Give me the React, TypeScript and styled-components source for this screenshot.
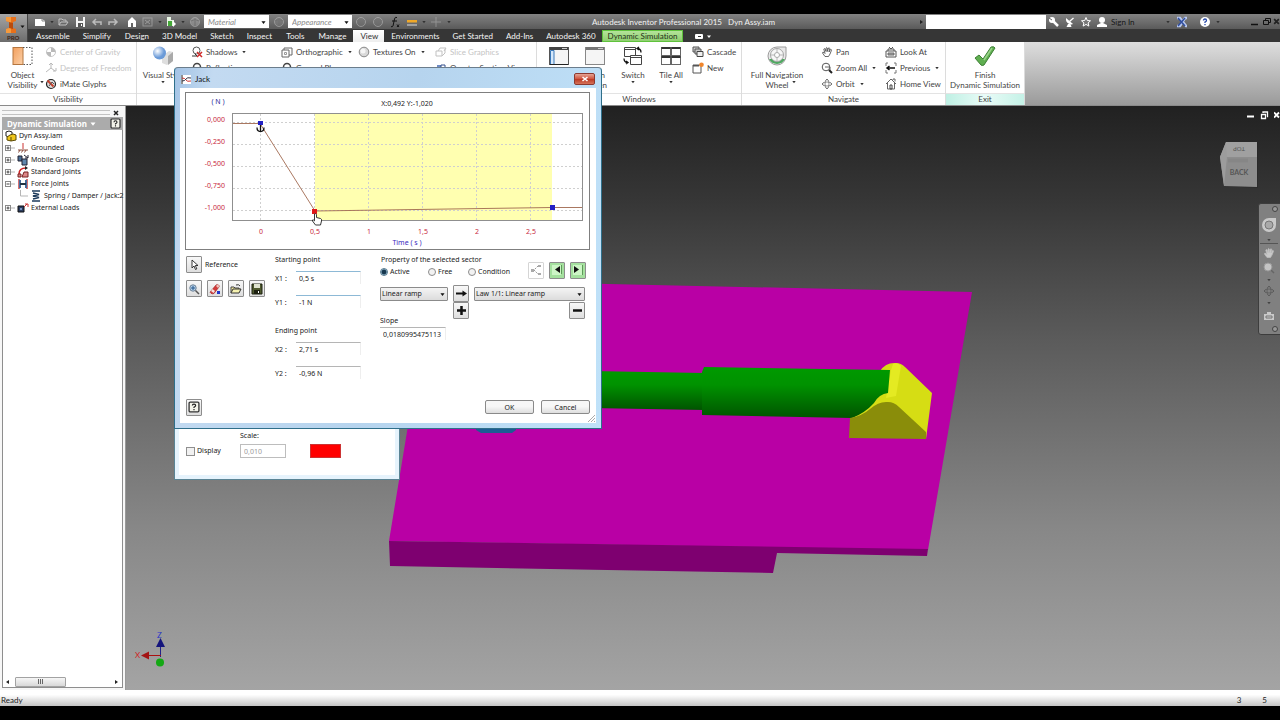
import React from "react";
import styled, { createGlobalStyle, css } from "styled-components";

const GlobalStyle = createGlobalStyle`
  * { box-sizing: border-box; }
  body { margin: 0; background: #000; font-variant-ligatures: none; }
  button, input, select { font: inherit; color: inherit; margin: 0; font-variant-ligatures: none; }
`;

const UI = `Lato, "Open Sans", sans-serif`;
const DIALOG = `"Noto Sans", "Open Sans", sans-serif`;

/* ---------- page shell ---------- */

const Page = styled.div`
  position: relative;
  display: flex;
  flex-direction: column;
  min-height: 100vh;
  padding: 14px 0;
  background: #000;
  overflow: hidden;
  font: 8px/10px ${UI};
  font-variant-ligatures: none;
  color: #333;
`;

const Header = styled.header`
  display: flex;
  background: #363636;
  height: 28px;
`;

const AppButton = styled.button`
  display: flex;
  align-items: center;
  flex: 0 0 27px;
  padding: 0;
  border: 0;
  border-right: 1px solid #444;
  background: linear-gradient(#a5a5a5, #6c6c6c);
`;

const HeaderMain = styled.div`
  flex: 1;
  min-width: 0;
  display: flex;
  flex-direction: column;
`;

const TitleBar = styled.div`
  display: flex;
  align-items: center;
  height: 15px;
  padding-left: 4px;
  background: linear-gradient(#828282, #5a5a5a);
  color: #fff;
`;

const Tool = styled.button<{ $w?: number; $dim?: boolean }>`
  display: flex;
  align-items: center;
  justify-content: center;
  flex: 0 0 ${(p) => p.$w ?? 16}px;
  height: 14px;
  padding: 0;
  border: 0;
  background: none;
  opacity: ${(p) => (p.$dim ? 0.4 : 1)};
`;

const Gap = styled.span<{ $w: number }>`
  flex: 0 0 ${(p) => p.$w}px;
`;

const ComboBox = styled.span<{ $w: number; $kind: "bar" | "dialog" }>`
  position: relative;
  display: block;
  flex: 0 0 ${(p) => p.$w}px;
  select {
    display: block;
    appearance: none;
    width: 100%;
    height: 13px;
    padding: 0 4px;
    border: 0;
    border-radius: 0;
    outline: 0;
    background: #fff;
    line-height: 12px;
    color: #8a8a8a;
    font-style: italic;
    ${(p) =>
      p.$kind === "dialog" &&
      css`
        height: 14px;
        border: 1px solid #8b8b8b;
        border-radius: 1px;
        padding: 0 1px;
        background: linear-gradient(#f4f4f4, #dcdcdc);
        color: #222;
        font-style: normal;
      `}
  }
  svg {
    position: absolute;
    right: 3px;
    top: 5px;
    pointer-events: none;
  }
`;

const WindowTitle = styled.h1`
  flex: 1;
  margin: 0;
  padding-left: 140px;
  font: 8px/12px ${UI};
  color: #f2f2f2;
  white-space: pre;
`;

const SearchBox = styled.input`
  flex: 0 0 120px;
  width: 120px;
  height: 14px;
  padding: 0 3px;
  border: 0;
  background: #fff;
`;

const SignIn = styled.button`
  flex: 0 0 54px;
  padding: 0 0 0 1px;
  border: 0;
  background: none;
  text-align: left;
  color: #161616;
`;

const Tabs = styled.nav`
  display: flex;
  align-items: stretch;
  height: 13px;
  padding: 0 1px;
`;

const Tab = styled.a<{ $state?: "active" | "context"; $wide?: boolean }>`
  padding: 1px ${(p) => (p.$wide ? 7 : 6)}px 0 7px;
  line-height: 12px;
  color: #f4f4f4;
  text-decoration: none;
  white-space: nowrap;
  ${(p) =>
    p.$state === "active" &&
    css`
      background: linear-gradient(#fff, #eee);
      color: #333;
      margin: 1px 0 0;
      padding-top: 0;
    `}
  ${(p) =>
    p.$state === "context" &&
    css`
      background: linear-gradient(#b4e39a, #8fce70);
      border: 1px solid #5fc23c;
      color: #1f2f18;
      padding: 0 5px;
      margin: 1px 0 0;
      line-height: 10px;
    `}
`;

/* ---------- ribbon ---------- */

const Ribbon = styled.section`
  display: flex;
  height: 64px;
  background: linear-gradient(#dedede, #9a9a9a);
  border-bottom: 1px solid #8a8a8a;
`;

const Panel = styled.div<{ $w: number }>`
  flex: 0 0 ${(p) => p.$w}px;
  display: flex;
  flex-direction: column;
  background: #fff;
  border-right: 1px solid #dcdcdc;
`;

const PanelBody = styled.div<{ $left?: number }>`
  flex: 1;
  min-height: 0;
  display: flex;
  align-items: flex-start;
  padding: 4px 0 0 ${(p) => p.$left ?? 0}px;
`;

const PanelLabel = styled.div<{ $exit?: boolean }>`
  flex: 0 0 12px;
  line-height: 10px;
  border-top: 1px solid #e3e3e3;
  text-align: center;
  color: #444;
  background: ${(p) => (p.$exit ? "linear-gradient(90deg,#bff0e4,#e9fbf7 50%,#c5f2e7)" : "#fff")};
`;

const BigButton = styled.button<{ $w: number }>`
  display: flex;
  flex-direction: column;
  align-items: center;
  flex: 0 0 ${(p) => p.$w}px;
  padding: 0;
  border: 0;
  background: none;
  color: #444;
  line-height: 10px;
  white-space: nowrap;
  > svg:first-child { margin-bottom: 4px; }
`;

const BigLine = styled.span`
  position: relative;
  svg { position: absolute; right: -7px; top: 0; }
`;

const ToolColumn = styled.div<{ $w: number }>`
  flex: 0 0 ${(p) => p.$w}px;
  display: flex;
  flex-direction: column;
`;

const SmallButton = styled.button`
  display: flex;
  align-items: center;
  gap: 3px;
  height: 16px;
  padding: 0 0 4px;
  border: 0;
  background: none;
  color: #444;
  white-space: nowrap;
  &:disabled { color: #c4c4c4; }
  &:disabled svg { opacity: 0.4; }
`;

const ArrowSlot = styled.span`
  display: flex;
  padding-left: 2px;
`;

/* ---------- workspace ---------- */

const Workspace = styled.main`
  flex: 1;
  display: flex;
  min-height: 0;
`;

const Browser = styled.aside`
  flex: 0 0 126px;
  width: 126px;
  min-width: 0;
  display: flex;
  flex-direction: column;
  padding: 2px 2px 2px 2px;
  background: #f7f7f7;
  border-right: 1px solid #999;
  font: 7px/12px ${DIALOG};
  color: #222;
`;

const Grip = styled.div`
  display: flex;
  align-items: center;
  gap: 3px;
  height: 9px;
  &::before {
    content: "";
    flex: 1;
    height: 3px;
    border: solid #c3c3c3;
    border-width: 1px 0;
  }
`;

const BareButton = styled.button`
  display: flex;
  padding: 0;
  border: 0;
  background: none;
`;

const BrowserTitle = styled.div`
  display: flex;
  align-items: center;
  justify-content: space-between;
  height: 13px;
  padding: 0 2px 0 5px;
  background: #ababab;
  color: #fff;
  font: bold 8px/12px ${DIALOG};
  white-space: nowrap;
  span { display: flex; align-items: center; gap: 3px; }
`;

const TreeBox = styled.div`
  flex: 1;
  min-width: 0;
  display: flex;
  flex-direction: column;
  justify-content: space-between;
  border: 1px solid #8e8e8e;
  border-top: 0;
  background: #fff;
`;

const Tree = styled.ul`
  list-style: none;
  margin: 0;
  padding: 0 0 0 2px;
`;

const TreeRow = styled.li<{ $level: number }>`
  display: flex;
  align-items: center;
  gap: 2px;
  height: 12px;
  padding-left: ${(p) => (p.$level === 2 ? 14 : 0)}px;
  white-space: nowrap;
  svg { flex: none; }
`;

const ScrollBar = styled.div`
  display: flex;
  align-items: center;
  height: 11px;
  padding: 0 4px 0 3px;
  gap: 5px;
`;

const ScrollThumb = styled.button`
  flex: 0 0 51px;
  height: 10px;
  display: flex;
  justify-content: center;
  align-items: center;
  padding: 0;
  margin-right: auto;
  border: 1px solid #a2a2a2;
  border-radius: 1px;
  background: linear-gradient(#f6f6f6, #d8d8d8);
`;

const Viewport = styled.section`
  position: relative;
  flex: 1;
  min-width: 0;
  background: linear-gradient(#212121 0%, #363636 16%, #5b5b5b 40%, #878787 72%, #a4a4a4 100%);
  overflow: hidden;
`;

const Scene = styled.svg`
  position: absolute;
  inset: 0;
  width: 100%;
  height: 100%;
`;

const MdiButtons = styled.div`
  position: absolute;
  top: 4px;
  right: 0;
  display: flex;
  gap: 5px;
`;

const ViewCube = styled.div`
  position: absolute;
  top: 33px;
  right: 20px;
`;

const NavBar = styled.div`
  position: absolute;
  top: 97px;
  right: -3px;
  width: 25px;
  height: 132px;
  display: flex;
  flex-direction: column;
  align-items: center;
  padding: 2px 4px 2px 0;
  background: #808080;
  border: 1px solid #3d3d3d;
  border-radius: 3px;
`;

const NavTool = styled.button<{ $h: number; $end?: boolean }>`
  display: flex;
  align-items: center;
  justify-content: center;
  align-self: ${(p) => (p.$end ? "flex-end" : "center")};
  height: ${(p) => p.$h}px;
  padding: 0;
  border: 0;
  background: none;
`;

const NavRule = styled.hr`
  width: 18px;
  height: 1px;
  margin: 1px 0;
  border: 0;
  background: #555;
`;

const StatusBar = styled.footer`
  display: flex;
  align-items: center;
  height: 16px;
  padding: 4px 13px 0 1px;
  gap: 21px;
  background: linear-gradient(#fff 30%, #c4c4c4);
  color: #222;
  span:first-child { flex: 1; }
`;

/* ---------- floating windows ---------- */

const BackWindow = styled.section`
  position: absolute;
  left: 174px;
  top: 174px;
  width: 226px;
  height: 306px;
  display: flex;
  flex-direction: column;
  justify-content: flex-end;
  padding: 0 4px 4px;
  border: 1px solid #5b8494;
  background: #e6f3fc;
  font: 7px/10px ${DIALOG};
  color: #222;
`;

const BackBody = styled.div`
  flex: 1;
  display: flex;
  align-items: flex-end;
  padding: 0 0 17px 7px;
  background: #fff;
`;

const DisplayCheck = styled.label`
  display: flex;
  align-items: center;
  gap: 2px;
  flex: 0 0 54px;
  height: 14px;
  input {
    appearance: none;
    width: 9px;
    height: 9px;
    border: 1px solid #8f8f8f;
    background: #f1f1f1;
  }
`;

const ScaleField = styled.label`
  display: flex;
  flex-direction: column;
  gap: 3px;
  flex: 0 0 70px;
  input {
    width: 46px;
    height: 14px;
    padding: 0 3px;
    border: 1px solid #bdbdbd;
    background: #fff;
    color: #999;
  }
`;

const ColorSwatch = styled.button`
  width: 31px;
  height: 14px;
  padding: 0;
  border: 1px solid #c33;
  background: #f00;
`;

const Dialog = styled.section`
  position: absolute;
  left: 174px;
  top: 67px;
  width: 428px;
  display: flex;
  flex-direction: column;
  padding: 0 5px 5px;
  border: 1px solid #2f6f8a;
  border-top-color: #6b7d8c;
  border-radius: 4px 4px 0 0;
  background: linear-gradient(100deg, #a3c3e5, #c3daf1 8%, #b6d4ee 50%, #c0e2f9);
  font: 7px/10px ${DIALOG};
  color: #222;
`;

const DialogTitle = styled.header`
  display: flex;
  align-items: center;
  gap: 4px;
  height: 20px;
  padding: 2px 1px 0;
  font: 8px/10px ${UI};
  color: #111;
  h2 { flex: 1; margin: 0; font: inherit; }
`;

const CloseButton = styled.button`
  display: flex;
  align-items: center;
  justify-content: center;
  width: 21px;
  height: 12px;
  padding: 0;
  border: 1px solid #8d3a30;
  border-radius: 2px;
  background: linear-gradient(#e5a595, #d0553f 48%, #bb3a24 52%, #d6735a);
`;

const DialogBody = styled.div`
  background: #fff;
  padding: 4px 6px 7px 5px;
`;

const ChartBox = styled.div`
  border: 1px solid #7f7f7f;
  height: 158px;
  svg { display: block; width: 100%; height: 100%; }
`;

const Columns = styled.div`
  display: grid;
  grid-template-columns: 84px 104px 1fr;
  padding: 5px 4px 0 0;
  height: 148px;
`;

const ButtonRow = styled.div<{ $gap: number; $mb?: number }>`
  display: flex;
  align-items: center;
  gap: ${(p) => p.$gap}px;
  margin-bottom: ${(p) => p.$mb ?? 0}px;
`;

const IconButton = styled.button<{ $bare?: boolean }>`
  display: flex;
  align-items: center;
  justify-content: center;
  flex: 0 0 16px;
  width: 16px;
  height: 17px;
  padding: 0;
  border: 1px solid ${(p) => (p.$bare ? "#d5d5d5" : "#8d8d8d")};
  border-radius: 1px;
  background: ${(p) => (p.$bare ? "#fff" : "linear-gradient(#f8f8f8, #dedede)")};
`;

const ToolSide = styled.div`
  width: 84px;
  padding: 1px 0 0 1px;
`;

const PointGroup = styled.fieldset`
  min-width: 0;
  margin: 0 0 0 6px;
  padding: 0;
  border: 0;
  height: 71px;
  legend { padding: 0 0 6px; line-height: 10px; }
`;

const PointField = styled.label`
  display: flex;
  align-items: flex-start;
  height: 24px;
  span { flex: 0 0 21px; padding-top: 3px; white-space: nowrap; }
`;

const ValueInput = styled.input<{ $tone: string; $w: number }>`
  width: ${(p) => p.$w}px;
  height: 13px;
  padding: 0 3px;
  border: 0;
  border-top: 1px solid ${(p) => p.$tone};
  border-right: 1px solid #eee;
  background: #fff;
`;

const SectorSide = styled.div`
  display: flex;
  flex-direction: column;
  padding-left: 7px;
`;

const SectorTop = styled.div`
  display: flex;
  justify-content: space-between;
  height: 30px;
`;

const RadioSet = styled.fieldset`
  margin: 0;
  padding: 0;
  border: 0;
  legend { padding: 0 0 0 1px; line-height: 10px; }
  > div { display: flex; padding-top: 2px; }
`;

const RadioLabel = styled.label<{ $w: number }>`
  display: flex;
  align-items: center;
  gap: 2px;
  width: ${(p) => p.$w}px;
  input {
    appearance: none;
    width: 8px;
    height: 8px;
    border: 1px solid #8b8b8b;
    border-radius: 50%;
    background: #f2f2f2;
  }
  input:checked {
    background: radial-gradient(circle, #16384f 0 2px, #a9cfe4 3px);
    border-color: #56788c;
  }
`;

const LawGrid = styled.div`
  display: grid;
  grid-template-columns: 68px 16px 90px 16px;
  column-gap: 5px;
  align-items: center;
  height: 34px;
  margin-bottom: -3px;
  > :nth-child(3) { grid-column: 3 / 5; }
  > :nth-child(4) { grid-column: 2; }
  > :nth-child(5) { grid-column: 4; }
`;

const SlopeField = styled.label`
  display: flex;
  flex-direction: column;
  width: 66px;
  span { height: 11px; line-height: 10px; }
`;

const Footer = styled.footer`
  display: flex;
  align-items: center;
  gap: 7px;
  height: 18px;
  padding-left: 1px;
`;

const Spacer = styled.span`
  flex: 1;
`;

const PushButton = styled.button`
  width: 49px;
  height: 14px;
  padding: 0;
  border: 1px solid #8a8a8a;
  border-radius: 2px;
  background: linear-gradient(#f7f7f7 45%, #dedede);
  line-height: 11px;
`;

const ResizeGrip = styled.svg`
  position: absolute;
  right: 5px;
  bottom: 5px;
`;

/* ---------- icons ---------- */

const Caret = ({ color = "#333", size = 5 }: { color?: string; size?: number }) => (
  <svg width={size} height={size} viewBox="0 0 6 6" aria-hidden="true">
    <path d="M0.5 1.5h5L3 4.8z" fill={color} />
  </svg>
);

const SmallCaret = ({ color }: { color?: string }) => <Caret color={color} size={4} />;

const Combo = ({ label, w, kind = "bar" }: { label: string; w: number; kind?: "bar" | "dialog" }) => (
  <ComboBox $w={w} $kind={kind}>
    <select aria-label={label} defaultValue={label}>
      <option>{label}</option>
    </select>
    <Caret color="#111" size={5} />
  </ComboBox>
);

const Svg = ({ w = 12, h = 12, vb, children }: { w?: number; h?: number; vb?: string; children: React.ReactNode }) => (
  <svg width={w} height={h} viewBox={vb ?? `0 0 ${w} ${h}`} fill="none" aria-hidden="true">
    {children}
  </svg>
);

const AppLogo = () => (
  <Svg w={27} h={28}>
    <path d="M6 3h10v4l-3 1v6l3 1v4H6v-4l3-1V8L6 7z" fill="#e8701a" />
    <path d="M6 3h5v16H6v-4l3-1V8L6 7z" fill="#f59a3c" />
    <path d="M9 8l4 1v6l-4-1z" fill="#b94b0c" />
    <path d="M20.500 11.500h4l-2 2.500z" fill="#111" />
    <text x="7" y="26" fontFamily="Lato, sans-serif" fontSize="6" fontWeight="bold" fill="#3a2416">PRO</text>
  </Svg>
);

const DocIcon = () => <Svg><path d="M1 3h7l3 2v5H1z" fill="#fff" /><path d="M8 3v2h3" stroke="#888" /></Svg>;
const OpenIcon = ({ c = "#c2c2c2" }) => <Svg><path d="M2 9V3h3l1 1h3v2M2 9l2-3h7L9 9z" stroke={c} /></Svg>;
const SaveIcon = () => <Svg><path d="M2 1h9v10H2z" fill="#f4f4f4" /><path d="M4 1h5v4H4z" fill="#777" /><path d="M4 7h5v4H4z" fill="#555" /><path d="M7 8h1v2H7z" fill="#fff" /></Svg>;
const UndoIcon = () => <Svg><path d="M10 9V6H3M5 3L2 6l3 3" stroke="#bcbcbc" strokeWidth="1.500" /></Svg>;
const RedoIcon = () => <Svg><path d="M2 9V6h7M7 3l3 3-3 3" stroke="#bcbcbc" strokeWidth="1.500" /></Svg>;
const HomeIcon = ({ c = "#fff" }) => <Svg><path d="M6 1l4 4v6H7V7H5v4H2V5z" fill={c} /></Svg>;
const PickIcon = () => <Svg><rect x="1" y="2" width="9" height="8" stroke="#ddd" /><path d="M3 4l5 4M8 4L3 8" stroke="#ddd" /></Svg>;
const UpdateIcon = () => <Svg><path d="M2 1h4v3h3v6H2z" fill="#e8f6e4" /><path d="M3 5h4v5H3z" fill="#44a838" /><path d="M8 5l3 3-3 3z" fill="#fff" /></Svg>;
const Sphere = ({ c = "#bbb" }) => <Svg><circle cx="6" cy="6" r="4.500" fill={c} stroke="#ddd" /><path d="M2 5q4-3 8 0M6 2v8" stroke="#777" /></Svg>;
const PlusIcon = ({ c = "#ccc" }) => <Svg><path d="M6 1v10M1 6h10" stroke={c} /></Svg>;

const WrenchIcon = () => <Svg><circle cx="4" cy="4" r="3" fill="#fff" /><path d="M4 4l6 6" stroke="#fff" strokeWidth="2.500" /><path d="M1 2l3 2" stroke="#666" /></Svg>;
const DishIcon = () => <Svg><path d="M2 2q-.500 4 2.500 5.500T9 8z" fill="#fff" /><path d="M4 8l-1.500 3h5L6.500 8z" fill="#fff" /><path d="M5.500 5.500L9.500 2" stroke="#fff" strokeWidth="1.300" /></Svg>;
const StarIcon = () => <Svg><path d="M6 1.500l1.300 3 3.200.3-2.400 2.100.8 3.200L6 8.400l-2.900 1.700.8-3.200L1.500 4.800l3.200-.3z" fill="#777" stroke="#fff" /></Svg>;
const UserIcon = () => <Svg><circle cx="6" cy="4" r="3" fill="#fff" /><path d="M1 11V9l4-2h2l4 2v2z" fill="#fff" /></Svg>;
const ExchangeIcon = () => <Svg><path d="M1 2h3l6 8h1M1 10h3l5-8h2" stroke="#b8c8f0" strokeWidth="2.500" /><path d="M2 2l7 8M2 10l7-8" stroke="#2f4ea0" strokeWidth="1.500" /></Svg>;
const HelpBall = () => <Svg><circle cx="6" cy="6" r="5" fill="#fff" /><path d="M4.500 4.500q0-1.500 1.500-1.500t1.500 1.500Q7.500 5.500 6 6v1M6 8v1.200" stroke="#2648a8" strokeWidth="1.300" /></Svg>;

const ObjectVisIcon = () => (
  <Svg w={21} h={20}>
    <defs>
      <linearGradient id="door" x1="0" y1="0" x2="1" y2="1"><stop offset="0" stopColor="#f3a05e" /><stop offset="1" stopColor="#fbd0a8" /></linearGradient>
    </defs>
    <rect x="1" y="1.500" width="10" height="17" fill="url(#door)" stroke="#b5763f" />
    <path d="M11 1.500h9v17h-9" stroke="#555" strokeDasharray="1.500 1.500" />
  </Svg>
);
const GravityIcon = () => <Svg><circle cx="6" cy="6" r="4.500" stroke="#777" /><path d="M6 6V1.500A4.500 4.500 0 0 1 10.500 6zM6 6v4.500A4.500 4.500 0 0 1 1.500 6z" fill="#555" /></Svg>;
const FreedomIcon = () => <Svg><path d="M1 10l5-4 4 3M6 6V1M4 3l2-2 2 2M8 9h3V6" stroke="#555" /></Svg>;
const GlyphIcon = () => <Svg><circle cx="6" cy="6" r="4.500" fill="#ddd" stroke="#222" strokeWidth="1.200" /><path d="M2.500 2.500l6 6" stroke="#c8402c" strokeWidth="2" /><path d="M4 8l3-4 2 2" stroke="#555" /></Svg>;
const VisualIcon = () => (
  <Svg w={22} h={20}>
    <defs>
      <radialGradient id="ball" cx="0.350" cy="0.350"><stop offset="0" stopColor="#fff" /><stop offset="1" stopColor="#6a9ad8" /></radialGradient>
    </defs>
    <path d="M10 10l7-5 4 1v9l-6 4-5-2z" fill="#dedede" />
    <path d="M16 10l5-4v9l-5 4z" fill="#aaa" />
    <circle cx="7.500" cy="7" r="6.500" fill="url(#ball)" />
  </Svg>
);
const ShadowIcon = () => <Svg><circle cx="5.500" cy="4.500" r="3.500" stroke="#555" /><path d="M1 10h5l-2-2" stroke="#333" /><path d="M6 6l5 5M11 6l-5 5" stroke="#cf2a2a" strokeWidth="1.500" /></Svg>;
const ReflectIcon = () => <Svg><circle cx="6" cy="5" r="3.500" stroke="#444" strokeWidth="1.500" /></Svg>;
const OrthoIcon = () => <Svg><path d="M1 4h7v7H1zM3 4V2h8v7H8" stroke="#666" /><path d="M3.500 6.500h2v2h-2z" stroke="#999" /></Svg>;
const TextureIcon = () => <Svg><circle cx="6" cy="6" r="4.800" fill="#d9d9d9" stroke="#888" /><circle cx="5" cy="5" r="2.500" fill="#f5f5f5" /></Svg>;
const SliceIcon = () => <Svg><path d="M1 5h6v5H1zM3 5l2-3h6l-2 3M7 10l3-3V3" stroke="#666" /></Svg>;
const QuarterIcon = () => <Svg><path d="M2 3h4v7H2z" fill="#6f8cc4" /><path d="M6 3h4v5H6z" stroke="#334f8c" /></Svg>;
const WindowIcon = ({ split }: { split?: boolean }) => (
  <Svg w={20} h={20}>
    <rect x="0.500" y="1.500" width="19" height="17" fill="#f5f5f5" stroke={split ? "#555" : "#888"} />
    <path d="M1 1h18v3H1z" fill={split ? "#444" : "#777"} />
    <path d="M13 2.500h5" stroke="#ccc" />
    {split && <path d="M1.500 4.500h3.500v14H1.500z" fill="#d5e8fb" stroke="#3a78b8" />}
    {split && <path d="M1 18.500h18" stroke="#222" />}
  </Svg>
);
const SwitchIcon = () => (
  <Svg w={20} h={20}>
    <path d="M1.500 1.500h11v9h-11zM1.500 3.500h11" fill="#fff" stroke="#444" />
    <path d="M7.500 9.500h11v9h-11zM7.500 11.500h11" fill="#fff" stroke="#444" />
    <path d="M14 2.500q4 0 4 4M16 1l-2 1.500L16 4M5 16.500q-4 0-4-4M3 15l2 1.500L3 18" stroke="#111" strokeWidth="1.300" />
  </Svg>
);
const TileIcon = () => (
  <Svg w={20} h={20}>
    {[0.5, 10.5].map((x) => [1.5, 10.5].map((y) => (
      <g key={`${x}-${y}`}>
        <rect x={x} y={y} width="9" height="8" fill="#fff" stroke="#666" />
        <path d={`M${x} ${y + 0.5}h9`} stroke="#333" strokeWidth="2" />
      </g>
    )))}
  </Svg>
);
const CascadeIcon = () => <Svg><path d="M1 1h6v5H1z" fill="#ccc" stroke="#555" /><path d="M3 3h6v5H3z" fill="#ccc" stroke="#555" /><path d="M5 5.500h6v5H5z" fill="#eee" stroke="#444" /></Svg>;
const NewWinIcon = () => <Svg><path d="M1 3h8v8H1z" fill="#fff" stroke="#555" /><path d="M1 3h6v1.500H1z" fill="#555" /><circle cx="9.500" cy="2.800" r="2.300" fill="#f0862c" /></Svg>;
const WheelIcon = () => (
  <Svg w={20} h={20}>
    <path d="M10 1h9v9a9 9 0 1 1-9-9z" fill="#e8e8e8" stroke="#9c9c9c" />
    <path d="M2 13a9 9 0 0 0 16 0z" fill="#4fa861" />
    <circle cx="10" cy="9" r="6.500" fill="#f7f7f7" stroke="#a5a5a5" />
    <path d="M10 3v12M4 9h12" stroke="#b5b5b5" />
    <circle cx="10" cy="9" r="2.500" fill="#fff" stroke="#aaa" />
  </Svg>
);
const HandIcon = ({ c = "#444", f = "#fff" }) => <Svg><path d="M4 10.500L1.500 7q0-1.500 1.500-.500l1 1L2.800 3q.700-1 1.300 0L5 5.500V2q.7-1 1.300 0v3.500L7.500 2q.8-.700 1.200.3L8 6l1.500-2.500q1-.3 1 .7L9 8l-1.500 2.500z" fill={f} stroke={c} strokeWidth="0.800" /></Svg>;
const ZoomIcon = () => <Svg><circle cx="5" cy="5" r="3.800" stroke="#555" /><path d="M8 8l3 3" stroke="#222" strokeWidth="2" /><path d="M4 5h5v3" stroke="#666" /></Svg>;
const OrbitIcon = ({ c = "#777" }) => <Svg><ellipse cx="6" cy="6" rx="4.500" ry="2" stroke={c} strokeWidth="0.800" /><ellipse cx="6" cy="6" rx="2" ry="4.500" stroke={c} strokeWidth="0.800" /><path d="M4.500 2.500L6 1l1.500 1.500M4.500 9.500L6 11l1.500-1.500M2.500 4.500L1 6l1.500 1.500M9.500 4.500L11 6 9.500 7.500" stroke={c} /></Svg>;
const LookIcon = () => <Svg><path d="M1 5h10v6H1zM3 5V3h6v2M4 1l2 2 2-2" stroke="#555" /><path d="M3 7h6v2H3z" fill="#aaa" stroke="#666" /></Svg>;
const PrevIcon = () => <Svg><path d="M1 4V1h2M9 1h2v3M1 8v3h2M9 11h2V8" stroke="#777" /><path d="M2 6h8M4.500 4L2 6l2.500 2" stroke="#111" strokeWidth="1.500" /></Svg>;
const HouseIcon = () => <Svg><path d="M1 6l5-5 5 5M2.500 5v6h7V5M8 2v-1h2v2.500" stroke="#666" /><path d="M5 7h2v4H5z" stroke="#444" /></Svg>;
const CheckIcon = () => <Svg w={22} h={20}><path d="M1 12l4-3 4 4L17 1q3-1 4 1L10 19q-2 1-3 0z" fill="#5fae50" stroke="#3d7f35" /><path d="M10 14L18 2" stroke="#9bd48c" strokeWidth="1.500" /></Svg>;

const HelpBox = ({ s = 11 }: { s?: number }) => (
  <Svg w={s} h={s} vb="0 0 11 11">
    <rect x="1" y="1" width="9" height="9" rx="1" fill="#f3f3ea" stroke="#333" strokeWidth="1.200" />
    <path d="M4 4.200q0-1.400 1.500-1.400T7 4.200Q7 5 5.500 5.700v.8M5.500 7.300v1.200" stroke="#222" strokeWidth="1.100" />
  </Svg>
);

const CrossIcon = ({ c = "#222", s = 5 }: { c?: string; s?: number }) => (
  <Svg w={s} h={s} vb="0 0 6 6"><path d="M1 1l4 4M5 1L1 5" stroke={c} strokeWidth="1.500" /></Svg>
);

/* tree glyphs */
const Expander = ({ open }: { open?: boolean }) => (
  <Svg w={10} h={12}>
    <path d="M6 6h4" stroke="#b5b5b5" />
    <rect x="0.500" y="3.500" width="5" height="5" fill="#fff" stroke="#8a8a8a" />
    <path d={open ? "M1.500 6h3" : "M1.500 6h3M3 4.500v3"} stroke="#444" />
  </Svg>
);
const Elbow = () => <Svg w={9} h={12}><path d="M1.500 0v6H9" stroke="#b5b5b5" /></Svg>;
const AssemblyIcon = () => <Svg><path d="M1 2l3-1 3 1v4l-3 1-3-1z" fill="#fff" stroke="#222" /><path d="M5 5l3-1 3 1v5l-5 1-4-1V7z" fill="#efc61d" stroke="#5b4a06" /><path d="M6 7v4" stroke="#5b4a06" /></Svg>;
const GroundIcon = () => <Svg><path d="M6 1v6" stroke="#c33" /><path d="M1 8h10M3 8l-1.500 2.500M6 8l-1.500 2.500M9 8l-1.500 2.500" stroke="#8a4a3a" /></Svg>;
const MobileIcon = () => <Svg><path d="M1 2h4v5H1z" fill="#4a6f96" stroke="#223" /><path d="M5 5h5v6H5z" fill="#5f86ac" stroke="#223" /><path d="M7 1l4 3M11 1v3H8" stroke="#223" /></Svg>;
const JointIcon = () => <Svg><path d="M2 8Q2 2 9 2" stroke="#c22" strokeWidth="1.500" /><path d="M8 0l3 2-3 2z" fill="#222" /><path d="M1 8h3v3H1zM7 6h4v5H5z" fill="#d88" stroke="#722" /></Svg>;
const ForceIcon = () => <Svg><path d="M2 1v10M10 1v10" stroke="#c44" strokeWidth="1.500" /><path d="M2 2h2v8H2zM8 2h2v8H8z" fill="#456a9c" /><path d="M3 6h6" stroke="#234" strokeWidth="2" /></Svg>;
const SpringIcon = () => <Svg><path d="M2 1h8M3 3l6 1.500L3 6l6 1.500L3 9M2 11h8" stroke="#1d3b5c" strokeWidth="1.500" /></Svg>;
const LoadIcon = () => <Svg><path d="M1 4h6v6H1z" fill="#2a3c60" stroke="#111" /><path d="M7 5l3-3M8 2h3v3" stroke="#c33" /><path d="M3 6h2v2H3z" fill="#7792bd" /></Svg>;

/* dialog glyphs */
const CurveIcon = () => <Svg w={10} h={9}><path d="M0 0h10v9H0z" fill="#fff" /><path d="M1 0v9" stroke="#222" /><path d="M1 3q3 0 4 2t5 1" stroke="#c33" /><path d="M1 6q3 0 4-2t5-1" stroke="#334" /></Svg>;
const PointerIcon = () => <Svg><path d="M4 1v8l2-2 1.500 3.500 1.300-.6L7.300 6.500H10z" fill="#fff" stroke="#222" strokeWidth="0.900" /></Svg>;
const MagnifyIcon = () => <Svg><circle cx="5" cy="5" r="3.200" fill="#b7d3ee" stroke="#6a7f94" /><path d="M5 3v4M3 5h4" stroke="#258" /><path d="M7.500 7.500L11 11" stroke="#555" strokeWidth="1.500" /></Svg>;
const EraserIcon = () => <Svg><path d="M1.500 8.500L7 2q1-1 2.500 0T10 4L5 10.500q-1.500.8-3-.200t-.500-1.800z" fill="#d33a3a" stroke="#922" strokeWidth="0.600" /><path d="M7 3l1.500-1.500 2 1.500-1.500 2z" fill="#eec3bb" /><path d="M2 8l1.500-2L6 8l-1.500 2z" fill="#f4e3e0" /><path d="M8 8h3v3H8z" fill="#2337c8" /></Svg>;
const FolderIcon = () => <Svg><path d="M1 10V4h3l1 1h4v2" fill="#eee79a" stroke="#444" /><path d="M1 10l2-4h8l-2 4z" fill="#f6f2b0" stroke="#333" /><path d="M6 2q3-1 4 1" stroke="#333" /></Svg>;
const DiskIcon = () => <Svg><path d="M1 1h10v10H1z" fill="#4f5a2e" stroke="#1c2010" /><path d="M3 1h6v4H3z" fill="#dfe3cf" /><path d="M3 7h6v4H3z" fill="#1c2010" /><path d="M7 8h1v2H7z" fill="#fff" /></Svg>;
const BranchIcon = () => <Svg><path d="M2 6h2l4-4M4 6l4 4" stroke="#999" strokeDasharray="2 1" /><path d="M1 5h3v3H1zM8 1h3v2H8zM8 9h3v2H8z" fill="#aaa" /></Svg>;
const StepIcon = ({ back }: { back?: boolean }) => (
  <Svg w={14} h={15}>
    <path d="M0 0h14v15H0z" fill="#a4e09e" />
    <path d="M2 2h9v10H2z" fill="#cdf5c6" />
    <path d={back ? "M10 3v7L5 6.500z" : "M3 3v7l5-3.500z"} fill="#111" />
    <path d={back ? "M11.500 2v9" : "M11.500 2v10"} stroke="#5d9a58" />
  </Svg>
);
const RightArrow = () => <Svg w={13} h={9}><path d="M1 4.500h8" stroke="#111" strokeWidth="2" /><path d="M7.500 1.500L12 4.500 7.500 7.500z" fill="#111" /></Svg>;
const PlusBold = () => <Svg w={11} h={11}><path d="M5.500 1v9M1 5.500h9" stroke="#111" strokeWidth="2.500" /></Svg>;
const MinusBold = () => <Svg w={11} h={11}><path d="M1 5.500h9" stroke="#111" strokeWidth="2.500" /></Svg>;

/* ---------- parts ---------- */

const Big = ({ w, icon, lines, arrow }: { w: number; icon: React.ReactNode; lines: string[]; arrow?: "side" | "below" }) => (
  <BigButton $w={w}>
    {icon}
    {lines.map((t, i) => (
      <BigLine key={t}>
        {t}
        {arrow === "side" && i === lines.length - 1 && <SmallCaret />}
      </BigLine>
    ))}
    {arrow === "below" && <SmallCaret />}
  </BigButton>
);

const Small = ({ icon, label, arrow, disabled }: { icon: React.ReactNode; label: string; arrow?: boolean; disabled?: boolean }) => (
  <SmallButton disabled={disabled}>
    {icon}
    {label}
    {arrow && <ArrowSlot><SmallCaret /></ArrowSlot>}
  </SmallButton>
);

const TABS = ["Assemble", "Simplify", "Design", "3D Model", "Sketch", "Inspect", "Tools", "Manage", "View", "Environments", "Get Started", "Add-Ins", "Autodesk 360"];
const WIDE_TABS = ["Simplify", "Inspect", "Tools", "Manage"];

const CHART_FONT = { fontFamily: '"Noto Sans", sans-serif', fontSize: 7 };

const Chart = () => (
  <svg viewBox="186 93 403 156" preserveAspectRatio="none" role="img" aria-label="Force against time" shapeRendering="crispEdges">
    <rect x="315" y="113" width="237" height="108" fill="#ffffb0" />
    <g stroke="#cfcfcf" strokeDasharray="2 2">
      {[122, 144, 166, 188, 210].map((y) => <path key={y} d={`M233 ${y}.500H582`} />)}
      {[260, 314, 368, 422, 476, 530].map((x) => <path key={x} d={`M${x}.500 114V220`} />)}
    </g>
    <rect x="232.500" y="113.500" width="350" height="107" fill="none" stroke="#8f8f8f" />
    <path d="M233 123.500h27L315 211l237-3.500h30" fill="none" stroke="#a0694f" strokeWidth="0.900" shapeRendering="geometricPrecision" />
    <path d="M258 121h5v4h-5zM550 205h5v5h-5z" fill="#2321c4" />
    <path d="M312 209h5v5h-5z" fill="#e01818" />
    <g shapeRendering="geometricPrecision">
      <path d="M260.500 125v7M257 127.500q0 4 3.500 4t3.500-4" fill="none" stroke="#111" strokeWidth="1.300" />
      <path d="M314.500 214q1.500-1 2 .500v3l4 1q1.500.5 1 2.500l-1 4h-5l-3-4q-.500-1.500 1-1l1 .8z" fill="#fff" stroke="#222" strokeWidth="0.900" />
    </g>
    <g {...CHART_FONT} fill="#c82840" textAnchor="end">
      {["0,000", "-0,250", "-0,500", "-0,750", "-1,000"].map((t, i) => <text key={t} x="225" y={122 + i * 22}>{t}</text>)}
    </g>
    <g {...CHART_FONT} fill="#c82840" textAnchor="middle">
      {["0", "0,5", "1", "1,5", "2", "2,5"].map((t, i) => <text key={t} x={261 + i * 54} y="234">{t}</text>)}
    </g>
    <g {...CHART_FONT} textAnchor="middle">
      <text x="218" y="104" fill="#2a2a9a">( N )</text>
      <text x="407" y="245" fill="#3a2ac0">Time ( s )</text>
      <text x="407" y="106" fill="#222">X:0,492 Y:-1,020</text>
    </g>
  </svg>
);

const Model = () => (
  <Scene viewBox="126 106 1154 584" preserveAspectRatio="xMinYMin slice" role="img" aria-label="Dyn Assy model">
    <defs>
      <linearGradient id="rod" x1="0" y1="0" x2="0" y2="1">
        <stop offset="0" stopColor="#009a00" />
        <stop offset="0.350" stopColor="#009200" />
        <stop offset="0.700" stopColor="#007000" />
        <stop offset="1" stopColor="#005400" />
      </linearGradient>
    </defs>
    <path d="M432 280L972 292L928 550L389 541z" fill="#b900a5" />
    <path d="M389 541L928 549L927 556L777 553L773 573L390 566z" fill="#7e0070" />
    <path d="M476 425h40v5l-4 3h-31l-5-3z" fill="#1c5c93" />
    <path d="M590 371L704 373V410L590 408z" fill="url(#rod)" />
    <path d="M880 371q6-9 16-8q5 0 9 4l27 26l-6 46l-30-4l-46-16z" fill="#d6dd14" />
    <path d="M886 398L891 370L893 364q5-2 8 2l-5 30z" fill="#e4ea22" />
    <path d="M702 372l2-5L890 370l-2 23q-9 1-14 10q-9 10-22 15L702 415z" fill="url(#rod)" />
    <path d="M849 438l1-20q12-2 20-9q9-8 18-7q6 0 11 5l27 25v7z" fill="#8a8d0a" />
    <g>
      <path d="M160.500 647v10" stroke="#22228a" />
      <path d="M156 647l4.500-9 4.500 9z" fill="#14147c" />
      <path d="M149 655.500h12" stroke="#a11" />
      <path d="M141 655.500l8-4v8z" fill="#a31515" />
      <circle cx="160" cy="662.500" r="4" fill="#14a814" />
      <text x="157" y="638" fontFamily="Lato, sans-serif" fontSize="8" fill="#2a35c8">Z</text>
      <text x="135" y="658" fontFamily="Lato, sans-serif" fontSize="8" fill="#d02424">X</text>
    </g>
  </Scene>
);

const Cube = () => (
  <Svg w={42} h={50}>
    <path d="M3 18L9 3h31v46l-33-2z" fill="#222" opacity="0.350" />
    <path d="M2 18L8 3h31v15z" fill="#a0a0a0" />
    <path d="M2 18h37v30L6 47z" fill="#8d8d8d" />
    <path d="M2 18L6 47l3-29L8 3z" fill="#9c9c9c" />
    <path d="M10 19.500h20v4H10z" fill="#868686" />
    <text x="21" y="36" textAnchor="middle" fontFamily="Lato, sans-serif" fontSize="7" fontWeight="bold" fill="#555">BACK</text>
    <text x="-21" y="-8" textAnchor="middle" transform="rotate(180)" fontFamily="Lato, sans-serif" fontSize="6" fill="#555">TOP</text>
  </Svg>
);

const TREE: { label: string; level: number; open?: boolean; icon: React.ReactNode }[] = [
  { label: "Dyn Assy.iam", level: 0, icon: <AssemblyIcon /> },
  { label: "Grounded", level: 1, icon: <GroundIcon /> },
  { label: "Mobile Groups", level: 1, icon: <MobileIcon /> },
  { label: "Standard Joints", level: 1, icon: <JointIcon /> },
  { label: "Force Joints", level: 1, open: true, icon: <ForceIcon /> },
  { label: "Spring / Damper / Jack:2", level: 2, icon: <SpringIcon /> },
  { label: "External Loads", level: 1, icon: <LoadIcon /> },
];

const TopHeader = () => (
  <Header>
    <AppButton aria-label="Inventor menu"><AppLogo /></AppButton>
    <HeaderMain>
      <TitleBar>
        <Tool aria-label="New"><DocIcon /></Tool>
        <Tool $w={7} aria-label="New options"><SmallCaret /></Tool>
        <Tool aria-label="Open"><OpenIcon /></Tool>
        <Tool $w={18} aria-label="Save"><SaveIcon /></Tool>
        <Tool aria-label="Undo"><UndoIcon /></Tool>
        <Tool aria-label="Redo"><RedoIcon /></Tool>
        <Gap $w={3} />
        <Tool aria-label="Home"><HomeIcon /></Tool>
        <Tool $dim aria-label="Select"><PickIcon /></Tool>
        <Tool $w={7} aria-label="Select options"><SmallCaret /></Tool>
        <Tool aria-label="Update"><UpdateIcon /></Tool>
        <Tool $w={7} aria-label="Update options"><SmallCaret /></Tool>
        <Tool $w={18} $dim aria-label="Materials"><Sphere /></Tool>
        <Combo label="Material" w={65} />
        <Tool $w={19} $dim aria-label="Appearances"><Sphere c="#888" /></Tool>
        <Combo label="Appearance" w={64} />
        <Tool $w={18} $dim aria-label="Adjust"><Sphere c="#777" /></Tool>
        <Tool $dim aria-label="Clear"><Sphere c="#777" /></Tool>
        <Tool $w={18} aria-label="Parameters">
          <Svg><path d="M8 1.500Q6 .500 5.500 3L4 10q-.500 1-2 .700M3 5h5M8 8.500l2 2.500M10 8.500L8 11" stroke="#111" /></Svg>
        </Tool>
        <Tool aria-label="Measure"><Svg><path d="M1 4h10v2.500H1z" fill="#f0a828" /><path d="M1 9h10" stroke="#ddd" /></Svg></Tool>
        <Tool $w={7} aria-label="Measure options"><SmallCaret /></Tool>
        <Tool $w={18} $dim aria-label="Add"><PlusIcon /></Tool>
        <Tool $w={7} aria-label="Customize"><SmallCaret /></Tool>
        <WindowTitle>{"Autodesk Inventor Professional 2015   Dyn Assy.iam"}</WindowTitle>
        <Tool $w={10} aria-label="Expand search"><Svg w={4} h={6}><path d="M1 1l3 2-3 2z" fill="#222" /></Svg></Tool>
        <SearchBox aria-label="Search" />
        <Tool aria-label="Subscription"><WrenchIcon /></Tool>
        <Tool aria-label="Communication"><DishIcon /></Tool>
        <Tool aria-label="Favorites"><StarIcon /></Tool>
        <Tool aria-label="Account"><UserIcon /></Tool>
        <SignIn>Sign In</SignIn>
        <Tool $w={8} aria-label="Sign in options"><SmallCaret /></Tool>
        <Tool $w={20} aria-label="Exchange"><ExchangeIcon /></Tool>
        <Gap $w={4} />
        <Tool $w={18} aria-label="Help"><HelpBall /></Tool>
        <Tool $w={7} aria-label="Help options"><SmallCaret /></Tool>
        <Gap $w={28} />
        <Tool $w={12} aria-label="Minimize"><Svg w={8} h={8}><path d="M0 6.500h7" stroke="#111" strokeWidth="1.500" /></Svg></Tool>
        <Tool $w={12} aria-label="Restore"><Svg w={9} h={9}><path d="M.500 3.500h5v4h-5zM2.500 3V1.500h5v4H6" stroke="#111" /></Svg></Tool>
        <Tool $w={7} aria-label="Close"><CrossIcon s={7} /></Tool>
      </TitleBar>
      <Tabs>
        {TABS.map((t) => (
          <Tab key={t} href="#" $wide={WIDE_TABS.includes(t)} $state={t === "View" ? "active" : undefined}>{t}</Tab>
        ))}
        <Tab href="#" $state="context">Dynamic Simulation</Tab>
        <Tool $w={40} aria-label="Ribbon display">
          <Svg w={18} h={10}><rect x="1" y="3" width="8" height="5" rx="1" fill="#fff" /><path d="M4 5.500h3" stroke="#333" /><path d="M13 4.500h4l-2 2.500z" fill="#fff" /></Svg>
        </Tool>
      </Tabs>
    </HeaderMain>
  </Header>
);

const RibbonBar = () => (
  <Ribbon>
    <Panel $w={137}>
      <PanelBody>
        <Big w={45} icon={<ObjectVisIcon />} lines={["Object", "Visibility"]} arrow="side" />
        <ToolColumn $w={90}>
          <Small icon={<GravityIcon />} label="Center of Gravity" disabled />
          <Small icon={<FreedomIcon />} label="Degrees of Freedom" disabled />
          <Small icon={<GlyphIcon />} label="iMate Glyphs" />
        </ToolColumn>
      </PanelBody>
      <PanelLabel>Visibility</PanelLabel>
    </Panel>
    <Panel $w={400}>
      <PanelBody $left={5}>
        <Big w={42} icon={<VisualIcon />} lines={["Visual Style"]} arrow="below" />
        <Gap $w={7} />
        <ToolColumn $w={90}>
          <Small icon={<ShadowIcon />} label="Shadows" arrow />
          <Small icon={<ReflectIcon />} label="Reflections" />
        </ToolColumn>
        <ToolColumn $w={77}>
          <Small icon={<OrthoIcon />} label="Orthographic" arrow />
          <Small icon={<ReflectIcon />} label="Ground Plane" />
        </ToolColumn>
        <ToolColumn $w={77}>
          <Small icon={<TextureIcon />} label="Textures On" arrow />
        </ToolColumn>
        <ToolColumn $w={90}>
          <Small icon={<SliceIcon />} label="Slice Graphics" disabled />
          <Small icon={<QuarterIcon />} label="Quarter Section View" />
        </ToolColumn>
      </PanelBody>
      <PanelLabel>Appearance</PanelLabel>
    </Panel>
    <Panel $w={205}>
      <PanelBody $left={4}>
        <Big w={36} icon={<WindowIcon split />} lines={["User", "Interface"]} />
        <Big w={36} icon={<WindowIcon />} lines={["Clean", "Screen"]} />
        <Big w={40} icon={<SwitchIcon />} lines={["Switch"]} arrow="below" />
        <Big w={36} icon={<TileIcon />} lines={["Tile All"]} arrow="below" />
        <Gap $w={3} />
        <ToolColumn $w={46}>
          <Small icon={<CascadeIcon />} label="Cascade" />
          <Small icon={<NewWinIcon />} label="New" />
        </ToolColumn>
      </PanelBody>
      <PanelLabel>Windows</PanelLabel>
    </Panel>
    <Panel $w={204}>
      <PanelBody $left={5}>
        <Big w={60} icon={<WheelIcon />} lines={["Full Navigation", "Wheel"]} arrow="side" />
        <Gap $w={14} />
        <ToolColumn $w={64}>
          <Small icon={<HandIcon />} label="Pan" />
          <Small icon={<ZoomIcon />} label="Zoom All" arrow />
          <Small icon={<OrbitIcon />} label="Orbit" arrow />
        </ToolColumn>
        <ToolColumn $w={58}>
          <Small icon={<LookIcon />} label="Look At" />
          <Small icon={<PrevIcon />} label="Previous" arrow />
          <Small icon={<HouseIcon />} label="Home View" />
        </ToolColumn>
      </PanelBody>
      <PanelLabel>Navigate</PanelLabel>
    </Panel>
    <Panel $w={79}>
      <PanelBody>
        <Big w={78} icon={<CheckIcon />} lines={["Finish", "Dynamic Simulation"]} />
      </PanelBody>
      <PanelLabel $exit>Exit</PanelLabel>
    </Panel>
  </Ribbon>
);

const ModelBrowser = () => (
  <Browser>
    <Grip><BareButton aria-label="Close browser"><CrossIcon s={6} /></BareButton><Gap $w={1} /></Grip>
    <BrowserTitle>
      <span>Dynamic Simulation <Caret color="#fff" size={6} /></span>
      <BareButton aria-label="Browser help"><HelpBox s={11} /></BareButton>
    </BrowserTitle>
    <TreeBox>
      <Tree>
        {TREE.map((n) => (
          <TreeRow key={n.label} $level={n.level}>
            {n.level === 1 && <Expander open={n.open} />}
            {n.level === 2 && <Elbow />}
            {n.icon}
            {n.label}
          </TreeRow>
        ))}
      </Tree>
      <ScrollBar>
        <BareButton aria-label="Scroll left"><Svg w={4} h={6}><path d="M3 1L0 3l3 2z" fill="#222" /></Svg></BareButton>
        <ScrollThumb aria-label="Scroll position"><Svg w={6} h={5}><path d="M.500 0v5M2.500 0v5M4.500 0v5" stroke="#666" /></Svg></ScrollThumb>
        <BareButton aria-label="Scroll right"><Svg w={4} h={6}><path d="M1 1l3 2-3 2z" fill="#222" /></Svg></BareButton>
      </ScrollBar>
    </TreeBox>
  </Browser>
);

const View3D = () => (
  <Viewport>
    <Model />
    <MdiButtons>
      <BareButton aria-label="Minimize view"><Svg w={9} h={10}><path d="M1 6.500h7" stroke="#fff" strokeWidth="2" /></Svg></BareButton>
      <BareButton aria-label="Restore view"><Svg w={9} h={10}><path d="M1.500 4.500h4v4h-4zM3 3V2h4.500v4.500H7" stroke="#fff" strokeWidth="1.300" /></Svg></BareButton>
      <BareButton aria-label="Close view"><Svg w={6} h={10}><path d="M0 2.500l5 5M5 2.500l-5 5" stroke="#fff" strokeWidth="1.800" /></Svg></BareButton>
    </MdiButtons>
    <ViewCube><Cube /></ViewCube>
    <NavBar>
      <NavTool $h={6} $end aria-label="Close bar"><Svg w={6} h={6}><circle cx="3" cy="3" r="2.500" fill="#999" stroke="#444" /></Svg></NavTool>
      <NavTool $h={25} aria-label="Steering wheel"><Svg w={16} h={16}><path d="M8 1h7v7a7 7 0 1 1-7-7z" fill="#c9c9c9" /><circle cx="8" cy="8" r="4" fill="#a9a9a9" stroke="#777" /></Svg></NavTool>
      <NavTool $h={5} aria-label="Wheel options"><SmallCaret color="#444" /></NavTool>
      <NavRule />
      <NavTool $h={15} aria-label="Pan view"><HandIcon c="#bbb" f="#c9c9c9" /></NavTool>
      <NavTool $h={16} aria-label="Zoom view"><Svg><circle cx="5" cy="5" r="4" fill="#c4c4c4" stroke="#999" /><path d="M8 8l3 3" stroke="#666" strokeWidth="1.500" /></Svg></NavTool>
      <NavTool $h={7} aria-label="Zoom options"><SmallCaret color="#444" /></NavTool>
      <NavTool $h={16} aria-label="Orbit view"><OrbitIcon c="#5c5c5c" /></NavTool>
      <NavTool $h={7} aria-label="Orbit options"><SmallCaret color="#444" /></NavTool>
      <NavTool $h={20} aria-label="Look at face"><Svg><path d="M1 4h10v6H1zM4 2h4v2H4z" fill="#c9c9c9" /><path d="M3 6h6v2H3z" stroke="#777" /></Svg></NavTool>
      <NavTool $h={6} $end aria-label="Bar options"><Svg w={6} h={6}><circle cx="3" cy="3" r="2.500" fill="#999" stroke="#444" /></Svg></NavTool>
    </NavBar>
  </Viewport>
);

const ForceWindow = () => (
  <BackWindow>
    <BackBody>
      <DisplayCheck><input type="checkbox" /> Display</DisplayCheck>
      <ScaleField>Scale:<input defaultValue="0,010" disabled /></ScaleField>
      <ColorSwatch aria-label="Force colour" />
    </BackBody>
  </BackWindow>
);

const Point = ({ title, tone, rows }: { title: string; tone: string; rows: [string, string][] }) => (
  <PointGroup>
    <legend>{title}</legend>
    {rows.map(([name, value]) => (
      <PointField key={name}>
        <span>{name} :</span>
        <ValueInput $tone={tone} $w={65} defaultValue={value} />
      </PointField>
    ))}
  </PointGroup>
);

const JackDialog = () => (
  <Dialog role="dialog" aria-label="Jack">
    <DialogTitle>
      <CurveIcon />
      <h2>Jack</h2>
      <CloseButton aria-label="Close"><Svg w={8} h={6}><path d="M1.500 1l5 4M6.500 1l-5 4" stroke="#fff" strokeWidth="1.600" /></Svg></CloseButton>
    </DialogTitle>
    <DialogBody>
      <ChartBox><Chart /></ChartBox>
      <Columns>
        <ToolSide>
          <ButtonRow $gap={3} $mb={7}>
            <IconButton id="ref-btn" aria-label="Pick reference"><PointerIcon /></IconButton>
            <label htmlFor="ref-btn">Reference</label>
          </ButtonRow>
          <ButtonRow $gap={5}>
            <IconButton aria-label="Zoom"><MagnifyIcon /></IconButton>
            <IconButton aria-label="Erase"><EraserIcon /></IconButton>
            <IconButton aria-label="Open curve"><FolderIcon /></IconButton>
            <IconButton aria-label="Save curve"><DiskIcon /></IconButton>
          </ButtonRow>
        </ToolSide>
        <div>
          <Point title="Starting point" tone="#8db9d6" rows={[["X1", "0,5 s"], ["Y1", "-1 N"]]} />
          <Point title="Ending point" tone="#b5b5b5" rows={[["X2", "2,71 s"], ["Y2", "-0,96 N"]]} />
        </div>
        <SectorSide>
          <SectorTop>
            <RadioSet>
              <legend>Property of the selected sector</legend>
              <div>
                <RadioLabel $w={48}><input type="radio" name="sector" defaultChecked />Active</RadioLabel>
                <RadioLabel $w={40}><input type="radio" name="sector" />Free</RadioLabel>
                <RadioLabel $w={48}><input type="radio" name="sector" />Condition</RadioLabel>
              </div>
            </RadioSet>
            <ButtonRow $gap={5}>
              <IconButton $bare aria-label="Links"><BranchIcon /></IconButton>
              <IconButton aria-label="Previous sector"><StepIcon back /></IconButton>
              <IconButton aria-label="Next sector"><StepIcon /></IconButton>
            </ButtonRow>
          </SectorTop>
          <LawGrid>
            <Combo kind="dialog" label="Linear ramp" w={68} />
            <IconButton aria-label="Apply law"><RightArrow /></IconButton>
            <Combo kind="dialog" label="Law 1/1: Linear ramp" w={111} />
            <IconButton aria-label="Add law"><PlusBold /></IconButton>
            <IconButton aria-label="Remove law"><MinusBold /></IconButton>
          </LawGrid>
          <SlopeField>
            <span>Slope</span>
            <ValueInput $tone="#b5b5b5" $w={66} defaultValue="0,0180995475113" />
          </SlopeField>
        </SectorSide>
      </Columns>
      <Footer>
        <IconButton aria-label="Help"><HelpBox s={12} /></IconButton>
        <Spacer />
        <PushButton>OK</PushButton>
        <PushButton>Cancel</PushButton>
      </Footer>
    </DialogBody>
    <ResizeGrip width="9" height="9" viewBox="0 0 9 9"><path d="M1 8l7-7M4 8l4-4M7 8l1-1" stroke="#aaa" /></ResizeGrip>
  </Dialog>
);

export default function App() {
  return (
    <>
      <GlobalStyle />
      <Page>
        <TopHeader />
        <RibbonBar />
        <Workspace>
          <ModelBrowser />
          <View3D />
        </Workspace>
        <StatusBar><span>Ready</span><span>3</span><span>5</span></StatusBar>
        <ForceWindow />
        <JackDialog />
      </Page>
    </>
  );
}
